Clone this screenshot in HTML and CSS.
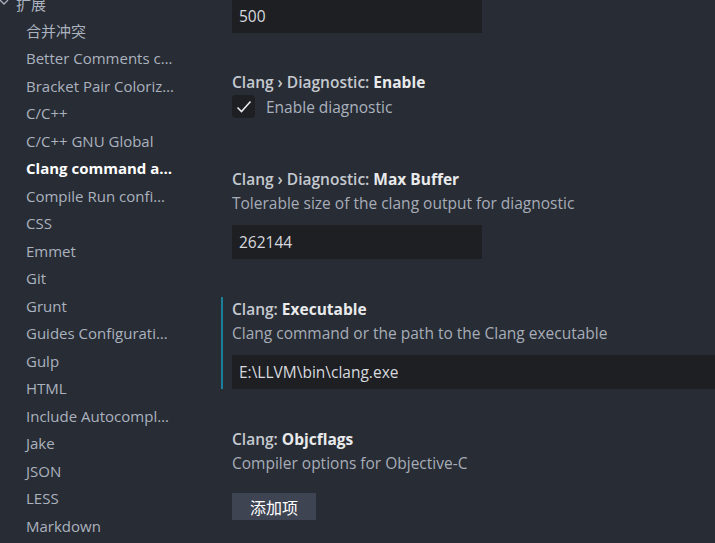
FILE: index.html
```html
<!DOCTYPE html>
<html lang="zh">
<head>
<meta charset="utf-8">
<title>Settings</title>
<link rel="stylesheet" href="styles.css">
</head>
<body>
<div class="app">
  <nav class="toc">
    <div class="toc-group">
      <svg class="chev" width="10" height="10" viewBox="0 0 10 10"><path d="M1 3 L5 7 L9 3" fill="none" stroke="currentColor" stroke-width="1.3"/></svg>
      <span>扩展</span>
    </div>
    <div class="toc-item">合并冲突</div>
    <div class="toc-item">Better Comments c…</div>
    <div class="toc-item">Bracket Pair Coloriz…</div>
    <div class="toc-item">C/C++</div>
    <div class="toc-item">C/C++ GNU Global</div>
    <div class="toc-item active">Clang command a…</div>
    <div class="toc-item">Compile Run confi…</div>
    <div class="toc-item">CSS</div>
    <div class="toc-item">Emmet</div>
    <div class="toc-item">Git</div>
    <div class="toc-item">Grunt</div>
    <div class="toc-item">Guides Configurati…</div>
    <div class="toc-item">Gulp</div>
    <div class="toc-item">HTML</div>
    <div class="toc-item">Include Autocompl…</div>
    <div class="toc-item">Jake</div>
    <div class="toc-item">JSON</div>
    <div class="toc-item">LESS</div>
    <div class="toc-item">Markdown</div>
  </nav>
  <main class="settings">
    <section class="item first">
      <div class="contents">
        <div class="input short">500</div>
      </div>
    </section>
    <section class="item bool">
      <div class="contents">
        <div class="title"><span class="cat">Clang › Diagnostic: </span><span class="label">Enable</span></div>
        <div class="check-row">
          <span class="checkbox"><svg width="18" height="18" viewBox="0 0 18 18"><path d="M2.5 9.5 L6.5 13.5 L15.5 3.5" fill="none" stroke="#e8eaee" stroke-width="1.6"/></svg></span>
          <span class="check-label">Enable diagnostic</span>
        </div>
      </div>
    </section>
    <section class="item">
      <div class="contents">
        <div class="title"><span class="cat">Clang › Diagnostic: </span><span class="label">Max Buffer</span></div>
        <div class="desc">Tolerable size of the clang output for diagnostic</div>
        <div class="input short">262144</div>
      </div>
    </section>
    <section class="item">
      <div class="contents focused">
        <div class="title"><span class="cat">Clang: </span><span class="label">Executable</span></div>
        <div class="desc">Clang command or the path to the Clang executable</div>
        <div class="input wide">E:\LLVM\bin\clang.exe</div>
      </div>
    </section>
    <section class="item">
      <div class="contents">
        <div class="title"><span class="cat">Clang: </span><span class="label">Objcflags</span></div>
        <div class="desc">Compiler options for Objective-C</div>
        <button class="btn">添加项</button>
      </div>
    </section>
  </main>
</div>
</body>
</html>
```
FILE: styles.css
```css
html, body {
  margin: 0;
  padding: 0;
  background: #282c34;
  overflow: hidden;
}
body {
  width: 715px;
  height: 543px;
  font-family: "Open Sans", "Noto Sans CJK SC", sans-serif;
  font-size: 15px;
  color: #abb2bf;
}
.app {
  display: flex;
  height: 543px;
  overflow: hidden;
}
.toc {
  width: 221px;
  flex: none;
  margin-top: -10px;
}
.toc-group {
  height: 27.5px;
  display: flex;
  align-items: center;
  gap: 7px;
  color: #abb2bf;
}
.chev {
  margin-left: -1px;
  margin-top: -4px;
}
.toc-item {
  height: 27.5px;
  line-height: 27.5px;
  padding-left: 26px;
  white-space: nowrap;
  color: #abb2bf;
}
.toc-item.active {
  color: #ffffff;
  font-weight: 700;
}
.settings {
  flex: 1;
  min-width: 0;
  margin-top: -45px;
  font-size: 15.5px;
}
.item {
  padding: 19px 0 19px 0;
}
.item.first {
  padding-top: 0;
  padding-bottom: 18px;
}
.item.bool {
  padding-bottom: 30px;
}
.contents {
  border-left: 2px solid transparent;
  padding-left: 9px;
}
.contents.focused {
  border-left-color: #1a7f9b;
}
.title {
  line-height: 24px;
  font-weight: 600;
  white-space: nowrap;
}
.cat {
  color: #c5c9d0;
}
.label {
  color: #e9eaec;
  font-weight: 700;
}
.desc {
  line-height: 24px;
  color: #a7adb8;
  white-space: nowrap;
}
.input {
  margin-top: 10px;
  height: 34px;
  line-height: 34px;
  background: #1e1f23;
  color: #d6d9de;
  padding-left: 7px;
  box-sizing: border-box;
  white-space: nowrap;
}
.first .input {
  margin-top: 0;
  height: 78px;
  padding-top: 44px;
}
.input.short {
  width: 250px;
}
.input.wide {
  width: 600px;
}
.check-row {
  display: flex;
  align-items: center;
  gap: 11px;
  margin-top: 1px;
  height: 23px;
}
.checkbox {
  width: 23px;
  height: 23px;
  border-radius: 4px;
  background: #1e1f23;
  display: flex;
  align-items: center;
  justify-content: center;
}
.check-label {
  color: #abb2bf;
}
.btn {
  margin-top: 18px;
  width: 84px;
  height: 27px;
  border: none;
  background: #3e4452;
  color: #ffffff;
  font-family: "Noto Sans CJK SC", sans-serif;
  font-size: 16px;
  padding: 0;
  display: block;
}
```
